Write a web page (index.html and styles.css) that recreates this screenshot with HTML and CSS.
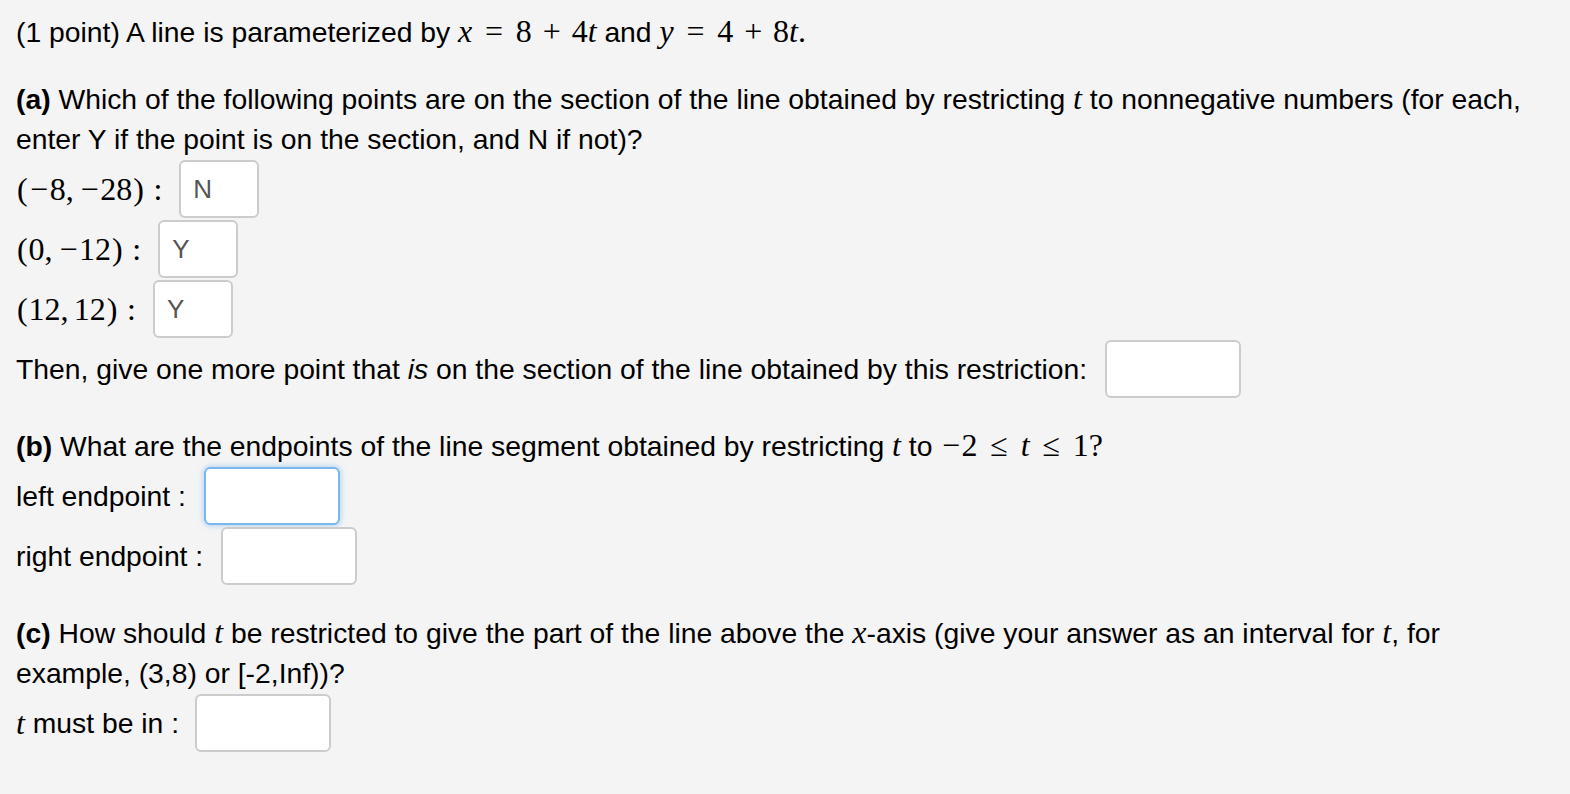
FILE: index.html
```html
<!DOCTYPE html>
<html>
<head>
<meta charset="utf-8">
<link rel="stylesheet" href="styles.css">
</head>
<body>
<div class="problem">
  <p class="para">(1 point) A line is parameterized by <span class="m"><i>x</i><span class="op">=</span>8<span class="bin">+</span>4<i>t</i></span> and <span class="m"><i>y</i><span class="op">=</span>4<span class="bin">+</span>8<i>t</i>.</span></p>

  <div class="para">
    <div class="line"><b>(a)</b> Which of the following points are on the section of the line obtained by restricting <span class="m"><i>t</i></span> to nonnegative numbers (for each,</div>
    <div class="line">enter Y if the point is on the section, and N if not)?</div>
    <div class="row"><span class="m"><span class="par">(</span><span class="neg">−</span>8,<span class="thin"></span><span class="neg">−</span>28<span class="par">)</span><span class="colon">:</span></span><span class="box small">N</span></div>
    <div class="row"><span class="m"><span class="par">(</span>0,<span class="thin"></span><span class="neg">−</span>12<span class="par">)</span><span class="colon">:</span></span><span class="box small">Y</span></div>
    <div class="row"><span class="m"><span class="par">(</span>12,<span class="thin"></span>12<span class="par">)</span><span class="colon">:</span></span><span class="box small">Y</span></div>
    <div class="row">Then, give one more point that <i>is</i> on the section of the line obtained by this restriction: <span class="box wide"></span></div>
  </div>

  <div class="para">
    <div class="line"><b>(b)</b> What are the endpoints of the line segment obtained by restricting <span class="m"><i>t</i></span> to <span class="m"><span class="neg">−</span>2<span class="op">≤</span><i>t</i><span class="op">≤</span>1?</span></div>
    <div class="row">left endpoint : <span class="box wide focus"></span></div>
    <div class="row">right endpoint : <span class="box wide"></span></div>
  </div>

  <div class="para">
    <div class="line"><b>(c)</b> How should <span class="m"><i>t</i></span> be restricted to give the part of the line above the <span class="m"><i>x</i></span>-axis (give your answer as an interval for <span class="m"><i>t</i></span>, for</div>
    <div class="line">example, (3,8) or [-2,Inf))?</div>
    <div class="row"><span class="m"><i>t</i></span> must be in : <span class="box wide"></span></div>
  </div>
</div>
</body>
</html>
```

FILE: styles.css
```css
html, body {
  margin: 0;
  padding: 0;
  background: #f4f4f4;
}
body {
  font-family: "Liberation Sans", Arial, sans-serif;
  font-size: 28.3px;
  color: #000;
}
.problem {
  padding: 12px 16px;
}
.para {
  margin: 0 0 27px 0;
  line-height: 40px;
}
.line {
  line-height: 40px;
  white-space: nowrap;
}
.row {
  height: 60px;
  display: flex;
  align-items: center;
  white-space: pre;
}
.m {
  font-family: "Liberation Serif", "Times New Roman", serif;
  font-size: 32px;
}
.line .m, .para > .m {
  line-height: 20px;
}
.op {
  padding: 0 0.4em;
}
.bin {
  padding: 0 0.34em;
}
.colon {
  padding: 0 0.278em;
}
.par {
  padding: 0 0.028em;
}
.neg {
  padding: 0 0.05em;
}
.thin {
  display: inline-block;
  width: 0.167em;
}
.box {
  display: inline-block;
  box-sizing: border-box;
  height: 58px;
  background: #fff;
  border: 2px solid #cccccc;
  border-radius: 6px;
  margin-left: 10px;
  font-family: "Liberation Sans", Arial, sans-serif;
  font-size: 26px;
  color: #555;
  line-height: 54px;
  padding-left: 12px;
}
.row > .m + .box {
  margin-left: 8px;
}
.small { width: 80px; }
.wide { width: 136px; }
.focus {
  border-color: #7ab8ee;
  box-shadow: 0 0 6px rgba(102, 175, 233, 0.6);
}
```
